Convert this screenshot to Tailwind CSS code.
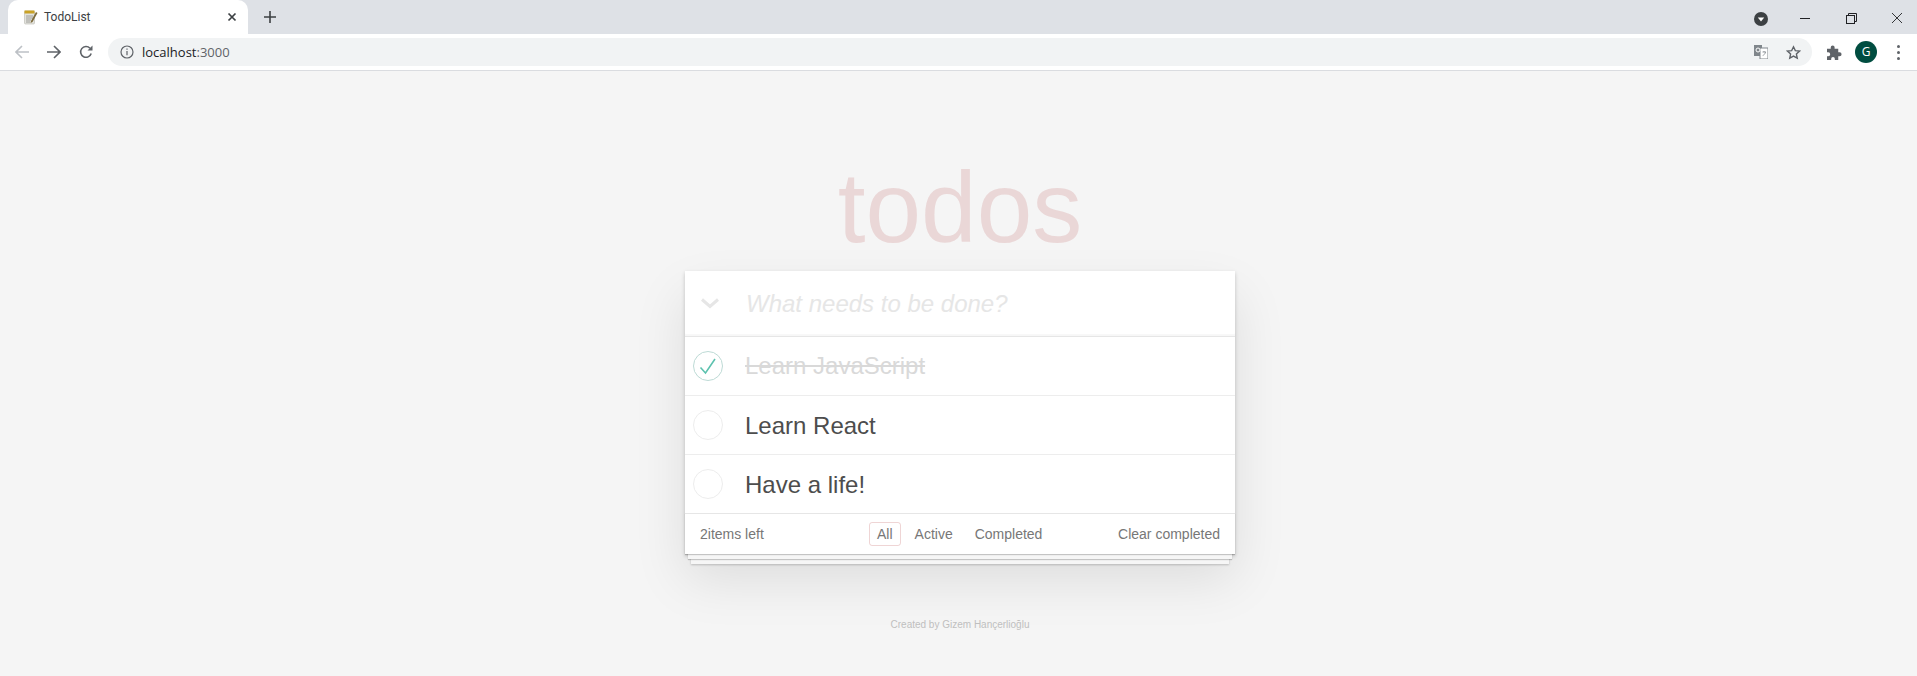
<!DOCTYPE html>
<html lang="en">
<head>
  <meta charset="UTF-8" />
  <meta name="viewport" content="width=device-width, initial-scale=1.0"/>
  <title>TodoList</title>
  <script src="https://cdn.jsdelivr.net/npm/@tailwindcss/browser@4"></script>
</head>
<body class="bg-[#f5f5f5] h-[676px] overflow-hidden font-['Liberation_Sans',sans-serif] text-[#4d4d4d]">

  <!-- browser chrome: tabs -->
  <div class="h-[34px] bg-[#dee1e6] flex items-end relative">
    <div class="ml-2 w-[240px] h-[34px] bg-white rounded-t-[10px] flex items-center pl-[15px] pr-[11px] relative">
      <svg class="w-4 h-4 mr-[5px]" viewBox="0 0 16 16">
        <rect x="1.500" y="2" width="10" height="13" rx="1" fill="#e3e3de" stroke="#b9b9b0" stroke-width=".6"/>
        <rect x="1.500" y="1.500" width="10" height="3" fill="#c9a227"/>
        <path d="M3 7h7M3 9h7M3 11h5M3 13h4" stroke="#8d8d88" stroke-width=".8"/>
        <path d="M8 12l5-9 1.500 1-5 9-2 1z" fill="#7c6a3c"/>
      </svg>
      <span class="text-xs font-['Roboto',sans-serif] text-[#3c4043] flex-1 leading-none">TodoList</span>
      <svg class="w-[10px] h-[10px]" viewBox="0 0 10 10"><path d="M1.500 1.500l7 7M8.500 1.500l-7 7" stroke="#3c4043" stroke-width="1.700"/></svg>
    </div>
    <svg class="w-3 h-3 ml-[16px] mb-[11px]" viewBox="0 0 12 12"><path d="M6 0v12M0 6h12" stroke="#3c4043" stroke-width="1.600"/></svg>
    <div class="ml-auto flex items-center h-[34px] mb-[-1px]">
      <svg class="w-[14px] h-[14px] mr-[32px] mt-[2px]" viewBox="0 0 14 14"><circle cx="7" cy="7" r="7" fill="#3c4043"/><path d="M3.800 5.500h6.400L7 9.500z" fill="#fff"/></svg>
      <svg class="w-[10px] h-[10px] mr-[36px]" viewBox="0 0 10 10"><path d="M0 5.500h10" stroke="#202124" stroke-width="1"/></svg>
      <svg class="w-[11px] h-[11px] mr-[35px]" viewBox="0 0 11 11" fill="none" stroke="#202124"><rect x=".5" y="2.500" width="8" height="8"/><path d="M2.500 2.500v-2h8v8h-2"/></svg>
      <svg class="w-[10px] h-[10px] mr-[15px]" viewBox="0 0 10 10"><path d="M0 0l10 10M10 0L0 10" stroke="#202124" stroke-width=".9"/></svg>
    </div>
  </div>

  <!-- browser chrome: toolbar -->
  <div class="h-[37px] bg-white border-b border-[#dadce0] flex items-center shrink-0">
    <div class="flex items-center w-[108px] shrink-0 pl-[15px] gap-[18px]">
      <svg class="w-[14px] h-[14px]" viewBox="0 0 14 14" fill="none" stroke="#bdc1c6" stroke-width="1.600"><path d="M14 7H1.500M7 1L1 7l6 6"/></svg>
      <svg class="w-[14px] h-[14px]" viewBox="0 0 14 14" fill="none" stroke="#5f6368" stroke-width="1.600"><path d="M0 7h12.500M7 1l6 6-6 6"/></svg>
      <svg class="w-[14px] h-[14px]" viewBox="0 0 14 14" fill="none" stroke="#5f6368" stroke-width="1.600"><path d="M12.200 8.500A5.400 5.400 0 1 1 11 3.200"/><path d="M13.500 .5v5h-5z" fill="#5f6368" stroke="none"/></svg>
    </div>
    <div class="h-7 w-[1704px] shrink-0 rounded-full bg-[#f1f3f4] flex items-center pl-[12px] pr-[11px]">
      <svg class="w-[14px] h-[14px]" viewBox="0 0 14 14" fill="none" stroke="#5f6368" stroke-width="1.200"><circle cx="7" cy="7" r="6"/><path d="M7 6v4.200M7 3.600v1.200"/></svg>
      <span class="ml-[8px] text-[13px] font-['Open_Sans',sans-serif] text-[#202124] leading-none">localhost<span class="text-[#5f6368]">:3000</span></span>
      <svg class="ml-auto mr-[18px] w-[14px] h-[14px]" viewBox="0 0 14 14"><rect x="0" y="0" width="8" height="11" fill="#80868b"/><rect x="6" y="3" width="8" height="11" fill="#fff" stroke="#80868b"/><path d="M8.500 7h3.500M10 6v1M11.500 7c-.4 2-1.500 3-2.800 3.500" stroke="#80868b" stroke-width=".8" fill="none"/><circle cx="4" cy="5" r="2" fill="none" stroke="#fff"/></svg>
      <svg class="w-[15px] h-[15px]" viewBox="0 0 24 24" fill="none" stroke="#5f6368" stroke-width="2.200"><path d="M12 2.800l2.900 6.200 6.700.8-5 4.600 1.400 6.700L12 17.700 6 21.100l1.400-6.700-5-4.600 6.700-.8z"/></svg>
    </div>
    <svg class="ml-[15px] w-[15px] h-[15px] shrink-0" viewBox="0 0 14 14"><path d="M0 3.500h3.500V2.200a1.800 1.800 0 0 1 3.600 0v1.300h3.400v3.300h1.300a1.800 1.800 0 0 1 0 3.600h-1.300V14H7.300v-1.200a1.700 1.700 0 0 0-3.400 0V14H0v-3.600h1.200a1.800 1.800 0 0 0 0-3.600H0z" fill="#5f6368"/></svg>
    <div class="ml-[13px] w-[22px] h-[22px] shrink-0 rounded-full bg-[#004d40] text-white text-[12px] font-['Open_Sans',sans-serif] flex items-center justify-center">G</div>
    <div class="ml-[20px] flex flex-col gap-[3px]">
      <div class="w-[3px] h-[3px] rounded-full bg-[#5f6368]"></div>
      <div class="w-[3px] h-[3px] rounded-full bg-[#5f6368]"></div>
      <div class="w-[3px] h-[3px] rounded-full bg-[#5f6368]"></div>
    </div>
  </div>

  <!-- page -->
  <main class="pl-[3px] flex flex-col items-center">
    <h1 class="text-[100px] leading-[115px] text-[#af2f2f]/15 mt-[79px] mb-[6px] font-normal">todos</h1>

    <section class="w-[550px] bg-white shadow-[0_2px_4px_0_rgba(0,0,0,0.2),0_25px_50px_0_rgba(0,0,0,0.1)]">
      <div class="h-[65px] flex items-center shadow-[inset_0_-2px_1px_rgba(0,0,0,0.03)]">
        <svg class="ml-[16px] w-[18px] h-[11px]" viewBox="0 0 18 11" fill="none" stroke="#e6e6e6" stroke-width="3"><path d="M1 1.500l8 7 8-7"/></svg>
        <span class="ml-[27px] text-2xl italic text-[#e6e6e6]">What needs to be done?</span>
      </div>

      <ul>
        <li class="h-[59px] border-t border-[#e6e6e6] flex items-center">
          <svg class="ml-[8px] w-[30px] h-[30px]" viewBox="0 0 30 30" fill="none">
            <circle cx="15" cy="15" r="14.500" stroke="#bddad5"/>
            <path d="M7.500 16.500l5 5.500 9.500-14" stroke="#5dc2af" stroke-width="1.600"/>
          </svg>
          <span class="ml-[22px] text-2xl text-[#d9d9d9] line-through">Learn JavaScript</span>
        </li>
        <li class="h-[59px] border-t border-[#ededed] flex items-center">
          <div class="ml-[8px] w-[30px] h-[30px] rounded-full border border-[#ededed]"></div>
          <span class="ml-[22px] mt-[1px] text-2xl">Learn React</span>
        </li>
        <li class="h-[59px] border-t border-[#ededed] flex items-center">
          <div class="ml-[8px] w-[30px] h-[30px] rounded-full border border-[#ededed]"></div>
          <span class="ml-[22px] mt-[1px] text-2xl">Have a life!</span>
        </li>
      </ul>

      <footer class="relative h-[41px] border-t border-[#e6e6e6] flex items-center px-[15px] text-sm text-[#777] shadow-[0_1px_1px_rgba(0,0,0,0.2),0_8px_0_-3px_#f6f6f6,0_9px_1px_-3px_rgba(0,0,0,0.2),0_16px_0_-6px_#f6f6f6,0_17px_2px_-6px_rgba(0,0,0,0.2)]">
        <span class="w-[169px]">2items left</span>
        <div class="flex items-center gap-[6px]">
          <a class="px-[7px] h-6 flex items-center rounded-[3px] border border-[#af2f2f]/20">All</a>
          <a class="px-[7px] h-6 flex items-center rounded-[3px] border border-transparent">Active</a>
          <a class="px-[7px] h-6 flex items-center rounded-[3px] border border-transparent">Completed</a>
        </div>
        <span class="ml-auto">Clear completed</span>
      </footer>
    </section>

    <p class="mt-[65px] text-[10px] leading-[11px] text-[#bfbfbf]">Created by Gizem Hançerlioğlu</p>
  </main>
</body>
</html>
